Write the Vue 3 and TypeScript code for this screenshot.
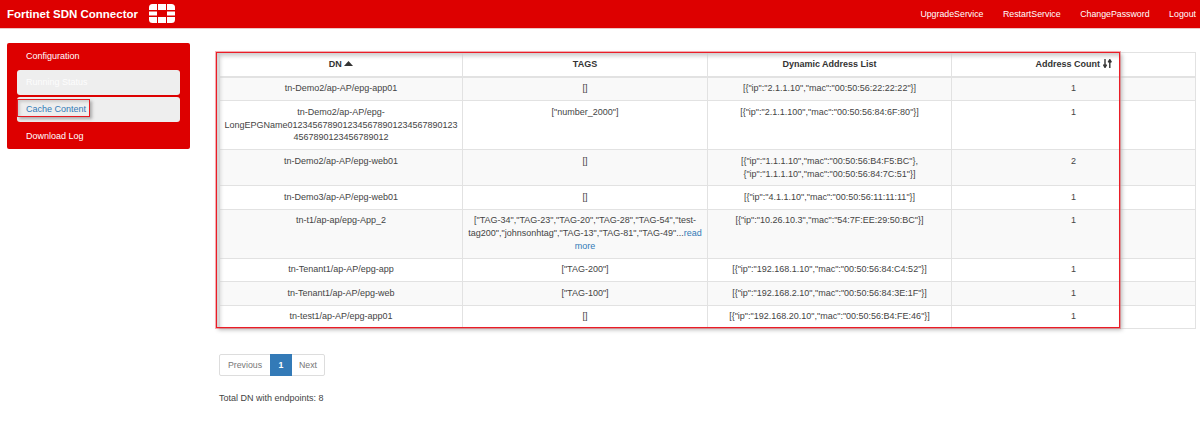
<script setup lang="ts">
interface Row { dn: string; tags: string; more?: boolean; list: string; count: number }
const rows: Row[] = [
  { dn: 'tn-Demo2/ap-AP/epg-app01', tags: '[]', list: '[{"ip":"2.1.1.10","mac":"00:50:56:22:22:22"}]', count: 1 },
  { dn: 'tn-Demo2/ap-AP/epg-LongEPGName01234567890123456789012345678901234567890123456789012', tags: '["number_2000"]', list: '[{"ip":"2.1.1.100","mac":"00:50:56:84:6F:80"}]', count: 1 },
  { dn: 'tn-Demo2/ap-AP/epg-web01', tags: '[]', list: '[{"ip":"1.1.1.10","mac":"00:50:56:B4:F5:BC"},{"ip":"1.1.1.10","mac":"00:50:56:84:7C:51"}]', count: 2 },
  { dn: 'tn-Demo3/ap-AP/epg-web01', tags: '[]', list: '[{"ip":"4.1.1.10","mac":"00:50:56:11:11:11"}]', count: 1 },
  { dn: 'tn-t1/ap-ap/epg-App_2', tags: '["TAG-34","TAG-23","TAG-20","TAG-28","TAG-54","test-tag200","johnsonhtag","TAG-13","TAG-81","TAG\u201149"...', more: true, list: '[{"ip":"10.26.10.3","mac":"54:7F:EE:29:50:BC"}]', count: 1 },
  { dn: 'tn-Tenant1/ap-AP/epg-app', tags: '["TAG-200"]', list: '[{"ip":"192.168.1.10","mac":"00:50:56:84:C4:52"}]', count: 1 },
  { dn: 'tn-Tenant1/ap-AP/epg-web', tags: '["TAG-100"]', list: '[{"ip":"192.168.2.10","mac":"00:50:56:84:3E:1F"}]', count: 1 },
  { dn: 'tn-test1/ap-AP/epg-app01', tags: '[]', list: '[{"ip":"192.168.20.10","mac":"00:50:56:B4:FE:46"}]', count: 1 },
]
const navLinks = ['UpgradeService', 'RestartService', 'ChangePassword', 'Logout']
</script>

<template>
  <div class="page">
    <header class="topbar">
      <span class="brand">Fortinet SDN Connector</span>
      <svg class="logo" width="26" height="19" viewBox="0 0 26 19" aria-hidden="true">
        <g fill="#fff">
          <path d="M8 0H3.5A3.5 3.5 0 0 0 0 3.5V6H8Z" />
          <rect x="9" y="0" width="8" height="6" />
          <path d="M18 0H22.5A3.5 3.5 0 0 1 26 3.5V6H18Z" />
          <rect x="0" y="7.5" width="8" height="4" />
          <rect x="18" y="7.5" width="8" height="4" />
          <path d="M0 13H8V19H3.5A3.5 3.5 0 0 1 0 15.5Z" />
          <rect x="9" y="13" width="8" height="6" />
          <path d="M18 13H26V15.5A3.5 3.5 0 0 1 22.5 19H18Z" />
        </g>
      </svg>
      <nav class="topnav">
        <a v-for="l in navLinks" :key="l">{{ l }}</a>
      </nav>
    </header>

    <div class="body">
      <aside class="side">
        <a class="item">Configuration</a>
        <a class="item pill muted">Running Status</a>
        <a class="item pill active"><span class="mark">Cache Content</span></a>
        <a class="item">Download Log</a>
      </aside>

      <main class="content">
        <div class="table-wrap">
          <table class="grid">
            <colgroup>
              <col class="c1" /><col class="c2" /><col class="c3" /><col class="c4" />
            </colgroup>
            <thead>
              <tr>
                <th>DN <svg class="caret" width="9" height="5" viewBox="0 0 9 5"><path d="M4.5 0L9 5H0Z" fill="#333" /></svg></th>
                <th>TAGS</th>
                <th>Dynamic Address List</th>
                <th>Address Count <svg class="sort" width="9" height="9" viewBox="0 0 9 9"><path d="M2 0V6.5M0.4 5.6L2 8.4L3.6 5.6M6.8 9V2.5M5.2 3.4L6.8 0.6L8.4 3.4" stroke="#333" stroke-width="1.4" fill="none" /></svg></th>
              </tr>
            </thead>
            <tbody>
              <tr v-for="r in rows" :key="r.dn">
                <td class="dn">{{ r.dn }}</td>
                <td class="tags">{{ r.tags }}<a v-if="r.more" class="link">read more</a></td>
                <td>{{ r.list }}</td>
                <td>{{ r.count }}</td>
              </tr>
            </tbody>
          </table>
          <div class="highlight"></div>
        </div>

        <div class="pager">
          <a class="pg prev">Previous</a>
          <a class="pg cur">1</a>
          <a class="pg next">Next</a>
        </div>
        <p class="total">Total DN with endpoints: 8</p>
      </main>
    </div>
  </div>
</template>

<style>
html, body { margin: 0; background: #fff; }
</style>

<style scoped>
.page {
  width: 1200px;
  height: 424px;
  overflow: hidden;
  font-family: "Liberation Sans", Arial, sans-serif;
  font-size: 9px;
  line-height: 12.75px;
  color: #444;
}
.topbar {
  height: 28px;
  display: flex;
  align-items: center;
  background: #dd0000;
  border-bottom: 1px solid #eec4c4;
  padding: 0 4px 0 7px;
}
.brand {
  width: 142px;
  color: #fff;
  font-size: 11.5px;
  font-weight: 700;
}
.logo { margin-top: -2px; }
.topnav {
  margin-left: auto;
  display: flex;
  gap: 19.5px;
  color: #fff;
  font-size: 8.8px;
}
.body {
  display: flex;
  align-items: flex-start;
  padding: 14px 5px 0 7px;
}
.side {
  width: 183px;
  height: 106px;
  flex: none;
  box-sizing: border-box;
  background: #dd0000;
  border-radius: 2px;
  padding: 0 10px;
  margin-right: 29px;
  display: flex;
  flex-direction: column;
  gap: 2px;
  color: #fff;
}
.item {
  display: block;
  height: 25px;
  line-height: 25px;
  padding: 0 9px;
  border-radius: 3px;
}
.item:first-child { line-height: 26px; }
.pill { background: #eee; }
.muted { color: #fdfdfd; }
.active { color: #337ab7; }
.mark { position: relative; }
.mark::after {
  content: "";
  position: absolute;
  left: -9px;
  top: -5px;
  width: 71px;
  height: 16px;
  border: 1px solid #e81820;
  box-shadow: 2px 2px 3px #aaa, inset 2px 2px 3px #ccc;
}
.content { flex: 1; padding-top: 9px; }
.table-wrap { position: relative; }
.grid {
  width: 976px;
  table-layout: fixed;
  border-collapse: collapse;
  border: 1px solid #e2e2e2;
}
.c1 { width: 243px; }
.c2 { width: 245px; }
.c3 { width: 244px; }
.c4 { width: 244px; }
.grid th, .grid td {
  border: 1px solid #e2e2e2;
  text-align: center;
  vertical-align: top;
  overflow-wrap: anywhere;
  font-weight: 400;
}
.grid th {
  height: 24px;
  padding: 0 5px;
  box-sizing: border-box;
  vertical-align: middle;
  font-weight: 700;
  color: #333;
  border-bottom-width: 2px;
}
.grid td { padding: 4.87px 5px; }
.grid td.dn { padding-left: 3px; padding-right: 3px; }
.grid td.tags { padding-left: 3px; padding-right: 3px; }
.grid tbody tr:nth-child(odd) { background: #f9f9f9; }
.caret { vertical-align: 1px; }
.sort { vertical-align: -1px; }
.link { color: #337ab7; }
.highlight {
  position: absolute;
  left: -3px;
  top: 0;
  box-sizing: border-box;
  width: 904px;
  height: 276px;
  border: 1px solid #ea1c26;
  box-shadow: 0 0 0 1px rgba(234, 60, 70, 0.4), 2px 2px 4px #bbb, inset 3px 3px 4px #ccc;
  pointer-events: none;
}
.pager {
  display: flex;
  margin-top: 25px;
  height: 22px;
  color: #777;
  font-size: 8.8px;
}
.pg {
  box-sizing: border-box;
  border: 1px solid #ddd;
  margin-left: -1px;
  line-height: 20px;
  text-align: center;
  background: #fff;
}
.prev { width: 52px; margin-left: 0; border-radius: 2px 0 0 2px; }
.cur { width: 22px; background: #337ab7; border-color: #337ab7; color: #fff; font-weight: 700; position: relative; }
.next { width: 34px; border-radius: 0 2px 2px 0; }
.total { margin: 16px 0 0; }
</style>
